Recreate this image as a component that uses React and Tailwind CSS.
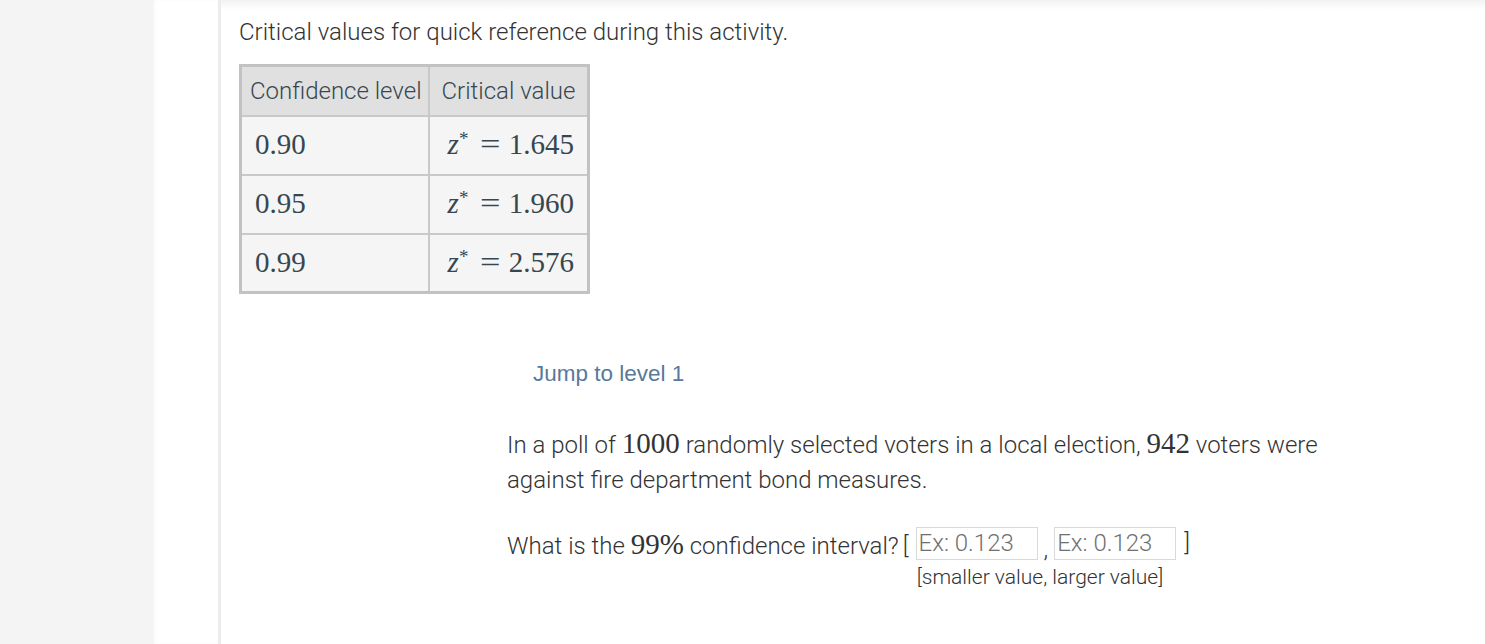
export default function App() {
  const rows = [
    ["0.90", "1.645"],
    ["0.95", "1.960"],
    ["0.99", "2.576"],
  ];
  const math = { fontFamily: '"Liberation Serif", "DejaVu Serif", serif' };

  return (
    <div className="flex h-[644px] w-full overflow-hidden bg-white font-['Roboto',sans-serif] font-light text-[#333]">
      <div className="w-[152px] shrink-0 bg-[#f4f4f4]" />
      <div className="w-[66px] shrink-0 bg-white shadow-[inset_3px_0_4px_-2px_rgba(0,0,0,0.08)]" />
      <div className="w-[3px] shrink-0 bg-[#ececec]" />
      <div className="relative flex-1 pl-[18px] pt-[16px]">
        <div className="pointer-events-none absolute inset-x-0 top-0 h-[10px] bg-gradient-to-b from-[rgba(0,0,0,0.05)] to-transparent" />
        <p className="text-[24px] leading-[32px]">Critical values for quick reference during this activity.</p>

        <table className="mt-[16px] border-collapse border-[3px] border-[#c2c2c2] text-[#37474f]">
          <thead>
            <tr className="h-[50px] bg-[#e0e0e0] text-[24px]">
              <th className="w-[188px] border-r-2 border-[#c9c9c9] pl-[8px] text-left font-light">Confidence level</th>
              <th className="w-[160px] pl-[12px] text-left font-light">Critical value</th>
            </tr>
          </thead>
          <tbody>
            {rows.map(([c, z]) => (
              <tr key={c} className="h-[59px] border-t-2 border-[#c9c9c9] bg-[#f5f5f5] text-[29px]">
                <td className="border-r-2 border-[#c9c9c9] pl-[13px]" style={math}>
                  {c}
                </td>
                <td className="whitespace-nowrap pr-[13px] text-right" style={math}>
                  <i>z</i>
                  <sup className="text-[19px]">*</sup>
                  <span className="ml-[14px] mr-[10px] inline-block scale-x-125">=</span>
                  {z}
                </td>
              </tr>
            ))}
          </tbody>
        </table>

        <div className="mt-[63px] pl-[294px] font-['Liberation_Sans',sans-serif] text-[22.5px] font-normal text-[#58789d]">
          Jump to level 1
        </div>

        <div className="mt-[37px] pl-[268px]">
          <p className="w-[830px] text-[24px] leading-[35px]">
            In a poll of <span className="text-[29px] leading-none" style={math}>1000</span> randomly selected voters in a local
            election, <span className="text-[29px] leading-none" style={math}>942</span> voters were against fire department bond
            measures.
          </p>
        </div>

        <div className="mt-[29px] flex pl-[268px] text-[24px]">
          <span className="pt-[2px] leading-[35px]">
            What is the <span className="text-[29px] leading-none" style={math}>99%</span> confidence interval?
          </span>
          <div className="ml-[4px] flex flex-col">
            <div className="flex items-start">
              <span className="pt-[2px] leading-[35px]">[</span>
              <input
                placeholder="Ex: 0.123"
                className="ml-[7px] h-[33px] w-[122px] border border-[#d6dadc] px-[2px] text-[24px] font-light placeholder:text-[#707070] outline-none"
              />
              <span className="mx-[6px] pt-[12px] leading-[20px]">,</span>
              <input
                placeholder="Ex: 0.123"
                className="h-[33px] w-[122px] border border-[#d6dadc] px-[2px] text-[24px] font-light placeholder:text-[#707070] outline-none"
              />
              <span className="ml-[8px] leading-[33px]">]</span>
            </div>
            <span className="ml-[14px] mt-0 text-[21px] leading-[26px]">[smaller value, larger value]</span>
          </div>
        </div>
      </div>
    </div>
  );
}
